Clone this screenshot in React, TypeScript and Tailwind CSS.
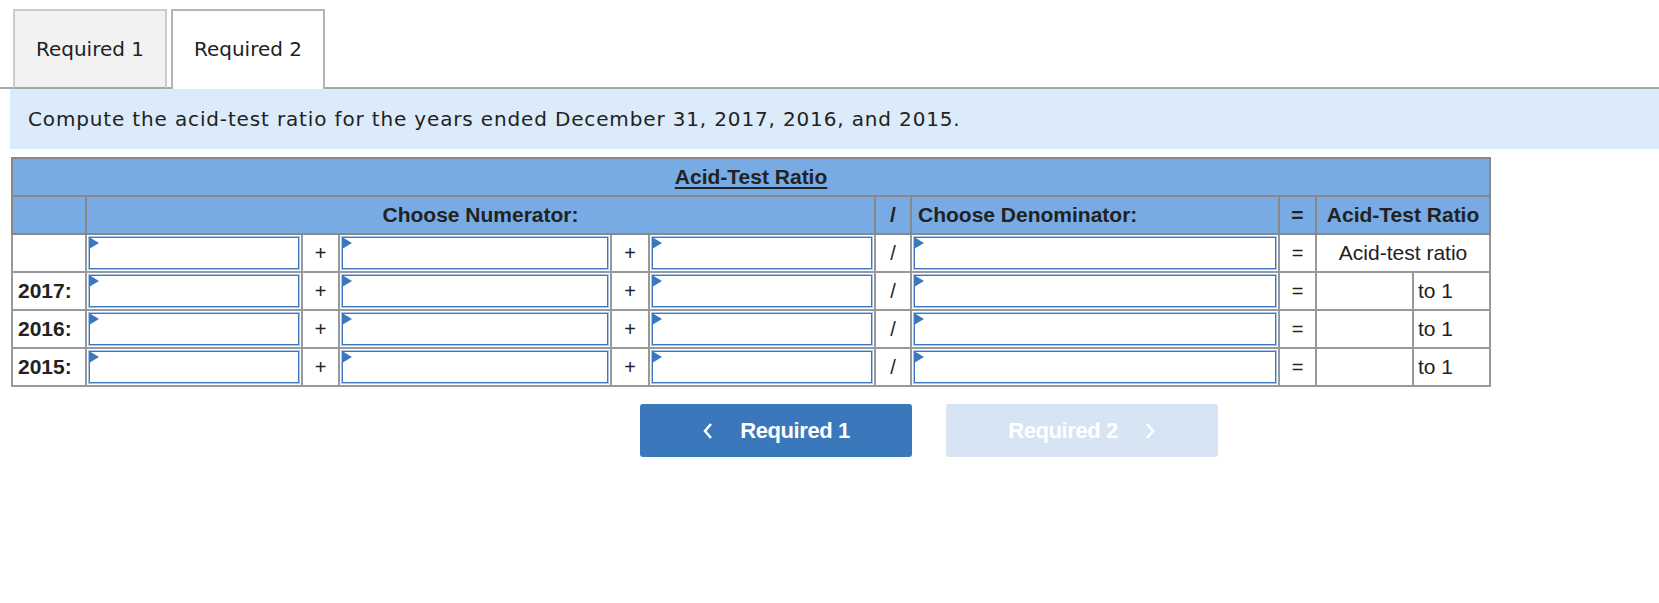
import React from "react";

const years = ["2017:", "2016:", "2015:"];

function Flag() {
  return (
    <svg
      className="absolute left-0 top-0"
      width="10"
      height="13"
      viewBox="0 0 10 13"
    >
      <polygon points="0,0 10,6 0,12" fill="#3a77c2" />
    </svg>
  );
}

function InputCell() {
  return (
    <td className="border-2 border-[#999] p-px">
      <div className="relative h-[34px] border border-[#a9c7ea] bg-white shadow-[inset_0_0_0_1px_#3d77bf]">
        <Flag />
      </div>
    </td>
  );
}

function Op({ sym }: { sym: string }) {
  return (
    <td className="border-2 border-[#999] text-center text-[20px] text-[#222]">
      {sym}
    </td>
  );
}

function Row({ label, first }: { label: string; first?: boolean }) {
  return (
    <tr className="h-[38px]">
      <td className="border-2 border-[#999] pl-[5px] text-[21px] font-bold text-[#222]">
        {label}
      </td>
      <InputCell />
      <Op sym="+" />
      <InputCell />
      <Op sym="+" />
      <InputCell />
      <Op sym="/" />
      <InputCell />
      <Op sym="=" />
      {first ? (
        <td
          colSpan={2}
          className="border-2 border-[#999] text-center text-[21px] text-[#222]"
        >
          Acid-test ratio
        </td>
      ) : (
        <>
          <td className="border-2 border-[#999]" />
          <td className="border-2 border-[#999] pl-[4px] text-[21px] text-[#222]">
            to 1
          </td>
        </>
      )}
    </tr>
  );
}

export default function App() {
  return (
    <div className="min-h-[603px] w-[1659px] bg-white pt-[9px]">
      {/* tabs */}
      <div className="flex items-end border-b-2 border-[#a6a6a6] pl-[13px]">
        <div className="-mb-[2px] flex h-[80px] w-[154px] items-center justify-center border-2 border-[#cccccc] border-b-[#a6a6a6] bg-[#f2f2f2] font-['DejaVu_Sans',sans-serif] text-[20px] text-[#222]">
          Required 1
        </div>
        <div className="-mb-[2px] ml-[4px] flex h-[80px] w-[154px] items-center justify-center border-2 border-b-0 border-[#b4b4b4] bg-white pb-[2px] font-['DejaVu_Sans',sans-serif] text-[20px] text-[#222]">
          Required 2
        </div>
      </div>

      {/* instructions */}
      <div className="ml-[10px] flex h-[60px] items-center bg-[#dbebf9] pl-[18px] font-['DejaVu_Sans',sans-serif] text-[20px] tracking-[0.85px] text-[#222]">
        Compute the acid-test ratio for the years ended December 31, 2017,
        2016, and 2015.
      </div>

      {/* table */}
      <div className="ml-[11px] mt-[8px] font-['Liberation_Sans',Arial,sans-serif]">
        <table className="w-[1478px] table-fixed border-collapse border-2 border-[#888]">
          <colgroup>
            <col className="w-[74px]" />
            <col className="w-[216px]" />
            <col className="w-[37px]" />
            <col className="w-[272px]" />
            <col className="w-[38px]" />
            <col className="w-[226px]" />
            <col className="w-[36px]" />
            <col className="w-[368px]" />
            <col className="w-[37px]" />
            <col className="w-[97px]" />
            <col className="w-[77px]" />
          </colgroup>
          <thead>
            <tr className="h-[38px] bg-[#78abe3]">
              <th
                colSpan={11}
                className="border-2 border-[#888] text-center text-[21px] font-bold text-[#222] underline underline-offset-[3px]"
              >
                Acid-Test Ratio
              </th>
            </tr>
            <tr className="h-[38px] bg-[#78abe3] text-[21px] font-bold text-[#222]">
              <th className="border-2 border-[#888]" />
              <th colSpan={5} className="border-2 border-[#888] text-center">
                Choose Numerator:
              </th>
              <th className="border-2 border-[#888] text-center">/</th>
              <th className="border-2 border-[#888] pl-[6px] text-left">
                Choose Denominator:
              </th>
              <th className="border-2 border-[#888] text-center">=</th>
              <th colSpan={2} className="border-2 border-[#888] text-center">
                Acid-Test Ratio
              </th>
            </tr>
          </thead>
          <tbody>
            <Row label="" first />
            {years.map((y) => (
              <Row key={y} label={y} />
            ))}
          </tbody>
        </table>
      </div>

      {/* navigation */}
      <div className="mt-[17px] flex gap-[34px] pl-[640px] font-['Liberation_Sans',Arial,sans-serif]">
        <button
          type="button"
          className="flex h-[53px] w-[272px] items-center justify-center gap-[26px] rounded-[3px] bg-[#3a77bb] text-[22px] font-bold tracking-[-0.4px] text-white"
        >
          <svg width="12" height="18" viewBox="0 0 12 18">
            <polyline
              points="9,2 3,9 9,16"
              fill="none"
              stroke="white"
              strokeWidth="2.5"
            />
          </svg>
          Required 1
        </button>
        <button
          type="button"
          className="flex h-[53px] w-[272px] items-center justify-center gap-[26px] rounded-[3px] bg-[#d6e4f3] text-[22px] font-bold tracking-[-0.4px] text-white"
        >
          Required 2
          <svg width="12" height="18" viewBox="0 0 12 18">
            <polyline
              points="3,2 9,9 3,16"
              fill="none"
              stroke="white"
              strokeWidth="2.5"
            />
          </svg>
        </button>
      </div>
    </div>
  );
}
